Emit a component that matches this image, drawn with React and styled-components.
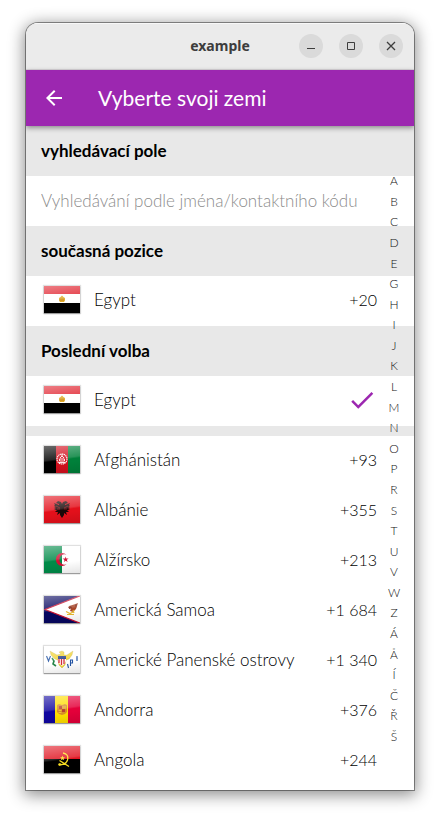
import styled, { createGlobalStyle } from "styled-components";
import { MdArrowBack, MdCheck } from "react-icons/md";

const countries = [
  { code: "af", name: "Afghánistán", dial: "+93" },
  { code: "al", name: "Albánie", dial: "+355" },
  { code: "dz", name: "Alžírsko", dial: "+213" },
  { code: "as", name: "Americká Samoa", dial: "+1 684" },
  { code: "vi", name: "Americké Panenské ostrovy", dial: "+1 340" },
  { code: "ad", name: "Andorra", dial: "+376" },
  { code: "ao", name: "Angola", dial: "+244" },
];

const letters = [..."ABCDEGHIJKLMNOPRSTUVWZÁÅÍČŘŠ"];

const GlobalStyle = createGlobalStyle`
  *,
  *::before,
  *::after {
    box-sizing: border-box;
  }

  body {
    margin: 0;
    background-color: #fff;
    color: #000;
    font-family: Lato, "Open Sans", sans-serif;
    font-size: 17px;
    line-height: 20px;
  }

  button,
  input {
    font: inherit;
    color: inherit;
  }

  button {
    padding: 0;
    border: none;
    background: none;
    cursor: pointer;
  }
`;

const Desktop = styled.div`
  display: flex;
  min-height: 100vh;
  padding: 23px 26px 29px;
`;

const Window = styled.div`
  flex: 1;
  display: flex;
  flex-direction: column;
  min-width: 0;
  overflow: hidden;
  border-radius: 12px 12px 0 0;
  background-color: #fff;
  box-shadow:
    0 0 0 1px rgba(0, 0, 0, 0.4),
    0 3px 16px 2px rgba(0, 0, 0, 0.45);
`;

const TitleBar = styled.header`
  display: grid;
  grid-template-columns: 1fr auto 1fr;
  align-items: center;
  height: 47px;
  padding: 0 11px;
  border-bottom: 1px solid #d8d4d8;
  background-color: #ebebeb;
  box-shadow: inset 0 1px #f8f8f8;
`;

const WindowTitle = styled.span`
  grid-column: 2;
  color: #3d3d3d;
  font-family: "Noto Sans", sans-serif;
  font-size: 14px;
  font-weight: 700;
`;

const WindowButtons = styled.div`
  display: flex;
  justify-content: flex-end;
  gap: 16px;
`;

const WindowButton = styled.button`
  display: grid;
  place-items: center;
  width: 24px;
  height: 24px;
  border-radius: 50%;
  background-color: #dadada;
  color: #3d3d3d;
`;

const AppBar = styled.div`
  position: relative;
  z-index: 1;
  display: flex;
  align-items: center;
  gap: 32px;
  height: 56px;
  padding: 0 16px;
  background-color: #9c27b0;
  color: #fff;
  box-shadow: 0 2px 5px rgba(0, 0, 0, 0.4);
`;

const BackButton = styled.button`
  display: grid;
  place-items: center;
  width: 24px;
  height: 24px;
`;

const PageTitle = styled.h1`
  margin: 0;
  font-size: 21px;
  font-weight: 400;
  line-height: 28px;
`;

const Content = styled.main`
  position: relative;
  flex: 1;
`;

const SectionTitle = styled.h2`
  display: flex;
  align-items: center;
  height: 50px;
  margin: 0;
  padding: 0 15px;
  background-color: #e8e8e8;
  font-size: 17px;
  font-weight: 700;
`;

const SearchInput = styled.input`
  display: block;
  width: 100%;
  height: 50px;
  padding: 0 45px 2px 15px;
  border: none;
  outline: none;
  background-color: #fff;

  &::placeholder {
    color: #8c8c8c;
    font-weight: 300;
    opacity: 1;
  }
`;

const Divider = styled.div`
  height: 10px;
  background-color: #e8e8e8;
`;

const List = styled.ul`
  margin: 0;
  padding: 0;
  list-style: none;
`;

const CountryButton = styled.button`
  display: flex;
  align-items: center;
  width: 100%;
  height: 50px;
  padding: 0 37px 2px 18px;
  font-weight: 300;
  text-align: left;
`;

const Name = styled.span`
  flex: 1;
  margin-left: 14px;
`;

const DialCode = styled.span`
  font-size: 16px;
`;

const CheckIcon = styled(MdCheck)`
  width: 30px;
  height: 30px;
  color: #9c27b0;
`;

const FlagFrame = styled.span`
  position: relative;
  width: 36px;
  height: 27px;
  margin-bottom: 1px;
  box-shadow: 0 0 1px 1px rgba(0, 0, 0, 0.12), 0 1px 1px rgba(0, 0, 0, 0.3);

  svg {
    display: block;
  }

  /* glossy highlight over the upper half */
  &::after {
    content: "";
    position: absolute;
    inset: 0;
    background: linear-gradient(
      172deg,
      rgba(255, 255, 255, 0.42),
      rgba(255, 255, 255, 0.16) 46%,
      transparent 52%,
      transparent 60%,
      rgba(0, 0, 0, 0.1)
    );
  }
`;

const LetterIndex = styled.nav`
  position: absolute;
  top: 0;
  right: 8px;
  bottom: 0;
  display: flex;
  flex-direction: column;
  width: 24px;
  padding: 45px 0 43px;
`;

const LetterButton = styled.button`
  flex: 1;
  color: #111;
  font-size: 12px;
  font-weight: 300;
  line-height: 16px;
`;

const flagArt = {
  eg: (
    <>
      <path fill="#e0202c" d="M0 0h36v9H0z" />
      <path fill="#fff" d="M0 8h36v10H0z" />
      <path fill="#000" d="M0 17h36v10H0z" />
      <path
        fill="#e0a92a"
        d="M15 12l1.500-1 1.500-1.500 1.500 1.500 1.500 1v2.500l-1 1.500h-4l-1-1.500z"
      />
      <path stroke="#b98520" strokeWidth=".5" d="M17 12v3M19 12v3M16 14h4" />
    </>
  ),
  af: (
    <>
      <path fill="#000" d="M0 0h12v27H0z" />
      <path fill="#d2101e" d="M12 0h12v27H12z" />
      <path fill="#00803a" d="M24 0h12v27H24z" />
      <g fill="none" stroke="#fff">
        <circle cx="18" cy="13" r="5" strokeWidth="1.1" strokeDasharray="1.4 .5" />
        <path strokeWidth=".9" d="M15.500 15v-2h5v2zM16 12l2-2 2 2M18 8v2M14.500 16.500h7" />
      </g>
    </>
  ),
  al: (
    <>
      <path fill="#e3101b" d="M0 0h36v27H0z" />
      <path
        fill="#1b0808"
        d="M18 8l-1-2-3-1-2 2 3 1v1l-5-2 1 2-1 1 2 1-2 1 2 1-2 1 3 0-2 2 3 0-1 3 3-2 0 2 2 3 2-3 0-2 3 2-1-3 3 0-2-2 3 0-2-1 2-1-2-1 2-1-1-1 1-2-5 2V8l3-1-2-2-3 1z"
      />
      <path stroke="#d01a22" strokeWidth=".5" d="M12 10l4 2M24 10l-4 2M13 13h3M23 13h-3" />
    </>
  ),
  dz: (
    <>
      <path fill="#008a48" d="M0 0h18v27H0z" />
      <path fill="#fff" d="M18 0h18v27H18z" />
      <path
        fill="#d21034"
        d="M22.500 8.700a6.400 6.400 0 1 0 0 9.600 5.200 5.200 0 1 1 0-9.600zM21.500 10.500l.8 2.100 2.300-.1-1.800 1.300.8 2.200-1.900-1.200-1.800 1.300.6-2.200-1.900-1.400h2.300z"
      />
    </>
  ),
  as: (
    <>
      <path fill="#06065f" d="M0 0h36v27H0z" />
      <path fill="#fff" stroke="#c8102e" strokeWidth="1.2" d="M38-1L1 13.500l37 14.500z" />
      <path fill="#a9472a" d="M34 7l-4 1.500-5 1.500-1 2 3 .5-1 2.500 3 1 3-3 1-3z" />
      <path fill="#7b281a" d="M25 11l2-1 1 2-3 1zM31 9l2-1-1 4z" />
      <path
        fill="none"
        stroke="#e6b82e"
        strokeWidth="1.2"
        d="M22 15.500l4 2 4-2M23 18.500h7M29 14l1 3"
      />
    </>
  ),
  vi: (
    <>
      <path fill="#fff" d="M0 0h36v27H0z" />
      <path
        fill="#f1d438"
        stroke="#b99f25"
        strokeWidth=".3"
        d="M17 8l-2-2 3-1 2 1v3h3l6-4-1 4-3 4-3 1-1 5-3 3-3-3-1-5-3-1-4-4-1-4 7 4z"
      />
      <path fill="#fff" d="M14 10h8v5q-1 3-4 5-3-2-4-5z" />
      <path stroke="#d52b3b" strokeWidth="1.300" d="M15 12v5M17.500 12v7M20 12v6" />
      <path fill="#243c87" d="M14 10h8v3h-8z" />
      <path fill="none" stroke="#2354a3" strokeWidth="1.200" d="M2.500 10l2 5 2-5M33 10v5" />
      <path fill="none" stroke="#2354a3" strokeWidth="1.100" d="M26.500 20v-6h2v3h-2M23.500 18l1 4" />
      <path fill="none" stroke="#27864a" strokeWidth="1.600" d="M8 12l2 3-1 3 3 2" />
    </>
  ),
  ad: (
    <>
      <path fill="#10069f" d="M0 0h12v27H0z" />
      <path fill="#fedd00" d="M11 0h14v27H11z" />
      <path fill="#e4003a" d="M24 0h12v27H24z" />
      <path fill="#d78b28" d="M13 9l2-1 3 1 3-1 2 1v7l-2 2-3 1-3-1-2-2z" />
      <path fill="#b8402f" d="M15 10h3v3h-3zM18 13h3v3h-3z" />
      <path
        stroke="#f6d34b"
        strokeWidth=".7"
        d="M19 10v3M21 10v3M14.500 14.500h3M14.500 16.500h3"
      />
    </>
  ),
  ao: (
    <>
      <path fill="#e01522" d="M0 0h36v13H0z" />
      <path fill="#000" d="M0 13h36v14H0z" />
      <path
        fill="none"
        stroke="#fbe122"
        strokeWidth="1.300"
        d="M19 7q6 1 4.500 7-1.500 5-7.500 4.500M15.500 14.500l9.500 6"
      />
      <path
        fill="#fbe122"
        d="M14 18l2-1 2 2-3 1zM18.500 9.500l.7 1.700h1.800l-1.400 1.200.5 1.800-1.600-1-1.600 1 .5-1.800-1.400-1.200h1.800z"
      />
    </>
  ),
};

function Flag({ code }) {
  return (
    <FlagFrame>
      <svg width="36" height="27" viewBox="0 0 36 27" aria-hidden="true">
        {flagArt[code]}
      </svg>
    </FlagFrame>
  );
}

function CountryRow({ code, name, dial, selected }) {
  return (
    <CountryButton type="button">
      <Flag code={code} />
      <Name>{name}</Name>
      {selected ? <CheckIcon /> : <DialCode>{dial}</DialCode>}
    </CountryButton>
  );
}

function App() {
  return (
    <>
      <GlobalStyle />
      <Desktop>
        <Window>
          <TitleBar>
            <WindowTitle>example</WindowTitle>
            <WindowButtons>
              <WindowButton type="button" aria-label="Minimalizovat">
                <svg width="10" height="10" fill="none" stroke="currentColor">
                  <path d="M1 7.500h8" />
                </svg>
              </WindowButton>
              <WindowButton type="button" aria-label="Maximalizovat">
                <svg width="10" height="10" fill="none" stroke="currentColor">
                  <path d="M1.500 1.500h7v7h-7z" />
                </svg>
              </WindowButton>
              <WindowButton type="button" aria-label="Zavřít">
                <svg width="10" height="10" fill="none" stroke="currentColor">
                  <path strokeWidth="1.300" d="M1 1l8 8M9 1l-8 8" />
                </svg>
              </WindowButton>
            </WindowButtons>
          </TitleBar>

          <AppBar>
            <BackButton type="button" aria-label="Zpět">
              <MdArrowBack size={24} />
            </BackButton>
            <PageTitle>Vyberte svoji zemi</PageTitle>
          </AppBar>

          <Content>
            <SectionTitle>
              <label htmlFor="search">vyhledávací pole</label>
            </SectionTitle>
            <SearchInput
              id="search"
              type="text"
              placeholder="Vyhledávání podle jména/kontaktního kódu"
            />

            <SectionTitle>současná pozice</SectionTitle>
            <CountryRow code="eg" name="Egypt" dial="+20" />

            <SectionTitle>Poslední volba</SectionTitle>
            <CountryRow code="eg" name="Egypt" selected />

            <Divider />
            <List>
              {countries.map((country) => (
                <li key={country.code}>
                  <CountryRow {...country} />
                </li>
              ))}
            </List>

            <LetterIndex aria-label="Abeceda">
              {letters.map((letter) => (
                <LetterButton key={letter} type="button">
                  {letter}
                </LetterButton>
              ))}
            </LetterIndex>
          </Content>
        </Window>
      </Desktop>
    </>
  );
}

export default App;
